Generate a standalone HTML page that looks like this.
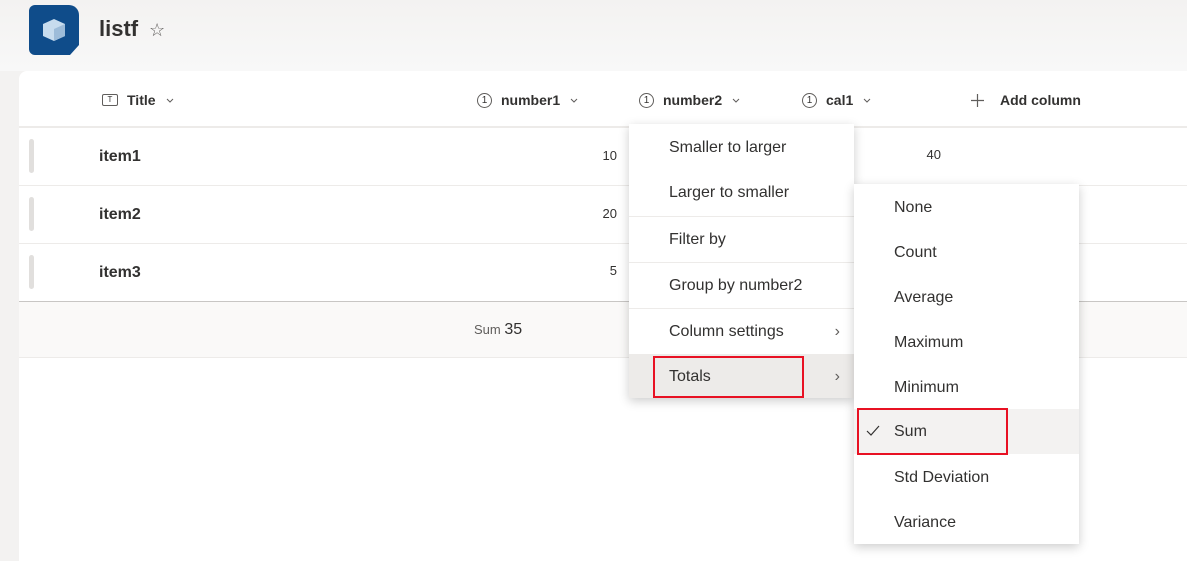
<!DOCTYPE html>
<html><head><style>
*{margin:0;padding:0;box-sizing:border-box}
body{width:1187px;height:549px;overflow:hidden;background:#f3f2f1;font-family:"Liberation Sans",sans-serif;color:#323130;position:relative}
.a{position:absolute}
.card{left:19px;top:71px;width:1180px;height:490px;background:#fff;border-radius:8px 0 0 0}
.hd{font-size:14px;font-weight:bold;color:#323130;display:flex;align-items:center;height:20px}
.row{left:19px;width:1170px;height:58px;border-bottom:1px solid #edebe9}
.hdl{left:29px;width:5px;height:34px;background:#e1dfdd;border-radius:3px}
.it{font-size:16px;font-weight:bold}
.num{font-size:13px;text-align:right;width:40px}
.menu{background:#fff;box-shadow:0 3px 10px rgba(0,0,0,.2);}
.mi{position:absolute;left:0;width:100%;height:45px;line-height:45px;font-size:16px;color:#323130;padding-left:40px}
.dv{position:absolute;left:0;width:100%;height:1px;background:#edebe9}
.circ{display:inline-block;width:15px;height:15px;border:1px solid #605e5c;border-radius:50%;font-size:10px;line-height:13px;text-align:center;font-weight:normal;margin-right:9px}
.red{border:2px solid #e81123}
</style></head><body>
<div class="a" style="left:0;top:0;width:1187px;height:71px;background:linear-gradient(#f3f2f1,#f8f8f8)"></div>
<div class="a" style="left:29px;top:5px;width:50px;height:50px;background:#0f4c8a;border-radius:6px 10px 6px 6px;clip-path:polygon(0 0,100% 0,100% 80%,82% 100%,0 100%)"></div>
<svg class="a" style="left:40px;top:16px" width="28" height="28" viewBox="0 0 28 28"><polygon points="14,3 25,8 25,20 14,25 3,20 3,8" fill="#c7dcee"/><polygon points="14,13 25,8 25,20 14,25" fill="#9dbcd9"/></svg>
<div class="a" style="left:99px;top:16px;font-size:22px;font-weight:bold;color:#323130">listf</div>
<div class="a" style="left:149px;top:20px;font-size:18px;color:#605e5c">☆</div>
<div class="a card"></div>
<div class="a" style="left:19px;top:126px;width:1170px;height:2px;background:#edebe9"></div>
<div class="a hd" style="left:102px;top:90px"><span style="display:inline-block;width:16px;height:12px;border:1px solid #605e5c;border-radius:2px;font-size:8px;line-height:10px;text-align:center;font-weight:normal;margin-right:9px">T</span>Title<svg width="8" height="5" style="margin-left:10px" viewBox="0 0 8 5"><path d="M1 1l3 3 3-3" stroke="#605e5c" fill="none"/></svg></div>
<div class="a hd" style="left:477px;top:90px"><span class="circ">1</span>number1<svg width="8" height="5" style="margin-left:10px" viewBox="0 0 8 5"><path d="M1 1l3 3 3-3" stroke="#605e5c" fill="none"/></svg></div>
<div class="a hd" style="left:639px;top:90px"><span class="circ">1</span>number2<svg width="8" height="5" style="margin-left:10px" viewBox="0 0 8 5"><path d="M1 1l3 3 3-3" stroke="#605e5c" fill="none"/></svg></div>
<div class="a hd" style="left:802px;top:90px"><span class="circ">1</span>cal1<svg width="8" height="5" style="margin-left:10px" viewBox="0 0 8 5"><path d="M1 1l3 3 3-3" stroke="#605e5c" fill="none"/></svg></div>
<div class="a hd" style="left:971px;top:90px"><svg width="13" height="13" style="margin-right:16px" viewBox="0 0 13 13"><path d="M6.5 0v13M0 6.5h13" stroke="#605e5c" stroke-width="1.2"/></svg>Add column</div>
<div class="a row" style="top:128px"></div><div class="a hdl" style="top:139px"></div>
<div class="a it" style="left:99px;top:148px">item1</div><div class="a num" style="left:577px;top:148px">10</div><div class="a num" style="left:901px;top:147px">40</div>
<div class="a row" style="top:186px"></div><div class="a hdl" style="top:197px"></div>
<div class="a it" style="left:99px;top:206px">item2</div><div class="a num" style="left:577px;top:206px">20</div>
<div class="a row" style="top:244px;border-bottom:1px solid #c8c6c4"></div><div class="a hdl" style="top:255px"></div>
<div class="a it" style="left:99px;top:264px">item3</div><div class="a num" style="left:577px;top:263px">5</div>
<div class="a" style="left:19px;top:302px;width:1170px;height:56px;background:#faf9f8;border-bottom:1px solid #edebe9"></div>
<div class="a" style="left:474px;top:321px;font-size:13px;color:#605e5c">Sum <span style="font-size:16px;color:#323130">35</span></div>

<div class="a menu" style="left:629px;top:124px;width:225px;height:274px">
<div class="mi" style="top:1px">Smaller to larger</div>
<div class="mi" style="top:46px">Larger to smaller</div>
<div class="dv" style="top:92px"></div>
<div class="mi" style="top:93px">Filter by</div>
<div class="dv" style="top:138px"></div>
<div class="mi" style="top:139px">Group by number2</div>
<div class="dv" style="top:184px"></div>
<div class="mi" style="top:185px">Column settings<span style="position:absolute;right:14px;color:#605e5c">›</span></div>
<div class="mi" style="top:230px;background:#edebe9;height:44px">Totals<span style="position:absolute;right:14px;color:#605e5c">›</span></div>
</div>
<div class="a red" style="left:653px;top:356px;width:151px;height:42px"></div>

<div class="a menu" style="left:854px;top:184px;width:225px;height:360px">
<div class="mi" style="top:1px">None</div>
<div class="mi" style="top:46px">Count</div>
<div class="mi" style="top:91px">Average</div>
<div class="mi" style="top:136px">Maximum</div>
<div class="mi" style="top:181px">Minimum</div>
<div class="mi" style="top:225px;background:#f3f2f1"><svg style="position:absolute;left:12px;top:16px" width="14" height="11" viewBox="0 0 14 11"><path d="M1 6l4 4 8-9" stroke="#323130" fill="none" stroke-width="1.2"/></svg>Sum</div>
<div class="mi" style="top:271px">Std Deviation</div>
<div class="mi" style="top:316px">Variance</div>
</div>
<div class="a red" style="left:857px;top:408px;width:151px;height:47px"></div>
</body></html>
